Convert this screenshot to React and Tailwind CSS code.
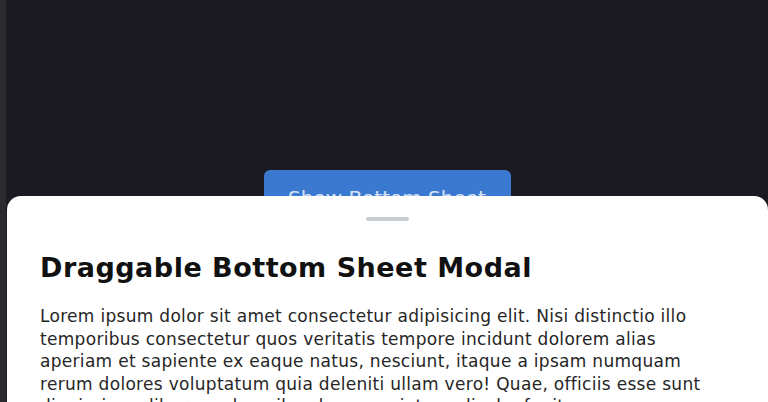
export default function App() {
  return (
    <div className="relative w-[768px] h-[402px] overflow-hidden bg-[#1b1a22] flex" style={{ fontFamily: '"DejaVu Sans", "Liberation Sans", sans-serif' }}>
      <div className="w-[6px] h-full bg-[#2b2b2e] shrink-0" />
      <div className="flex-1 flex flex-col items-center">
        <div className="h-[170px] shrink-0" />
        <button className="w-[247px] h-[52px] rounded-[6px] bg-[#3a79cf] text-[#d6e3f5] text-[20px] flex items-start justify-center pt-[13px]">
          Show Bottom Sheet
        </button>
      </div>
      <div className="absolute left-[7px] right-0 top-[196px] bottom-0 bg-white rounded-t-[14px] flex flex-col">
        <div className="flex justify-center pt-[21px]">
          <div className="w-[43px] h-[4px] rounded-full bg-[#c8cbd2]" />
        </div>
        <div className="pl-[33px] pr-[10px] pt-[30px]">
          <h1 className="text-[27px] font-bold text-[#111] leading-[34px] tracking-[0.5px] whitespace-nowrap">Draggable Bottom Sheet Modal</h1>
          <p className="mt-[20px] text-[17px] leading-[22.6px] tracking-[0.3px] text-[#262626] whitespace-nowrap">
            Lorem ipsum dolor sit amet consectetur adipisicing elit. Nisi distinctio illo<br />
            temporibus consectetur quos veritatis tempore incidunt dolorem alias<br />
            aperiam et sapiente ex eaque natus, nesciunt, itaque a ipsam numquam<br />
            rerum dolores voluptatum quia deleniti ullam vero! Quae, officiis esse sunt<br />
            dignissimos libero unde quibusdam eveniet, explicabo fugit.
          </p>
        </div>
      </div>
    </div>
  );
}
